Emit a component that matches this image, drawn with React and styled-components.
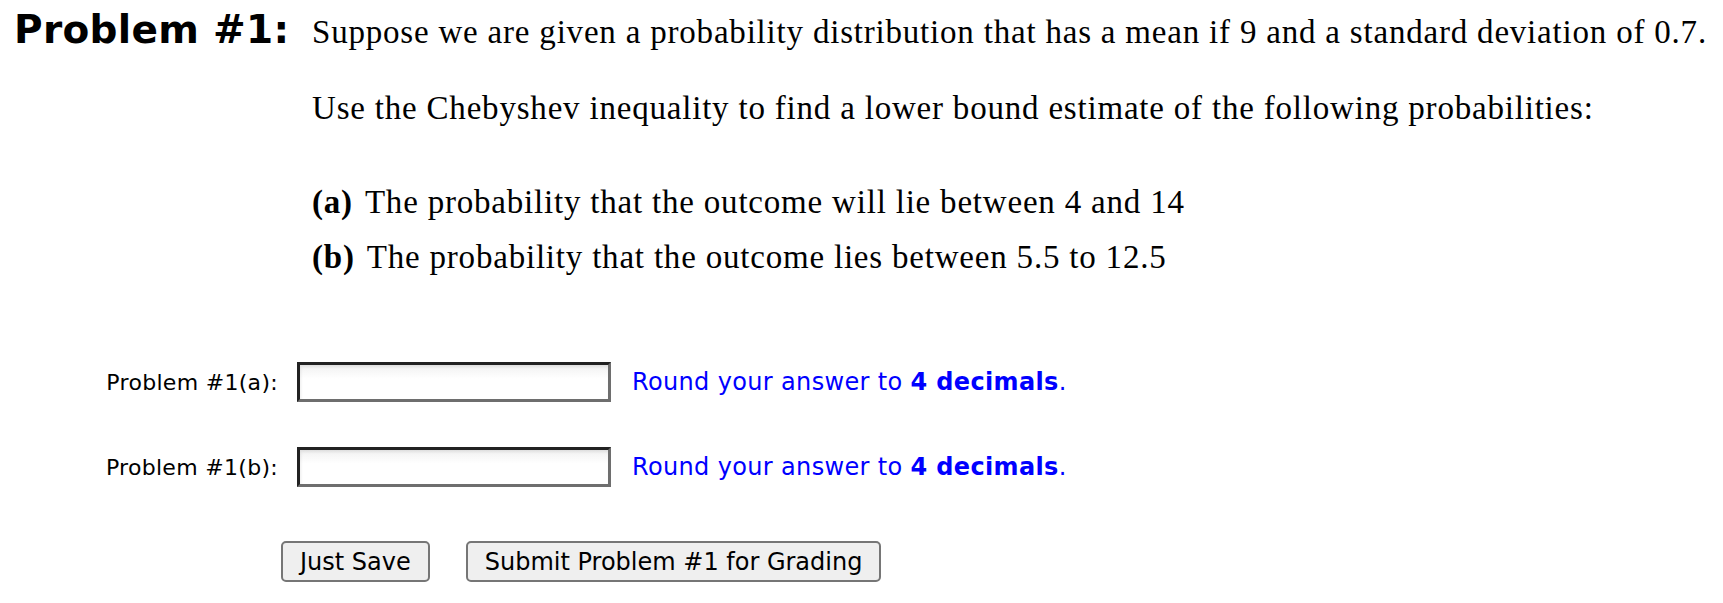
import React from "react";
import styled, { createGlobalStyle } from "styled-components";

const GlobalStyle = createGlobalStyle`
  html, body {
    margin: 0;
    padding: 0;
    background: #ffffff;
  }
`;

const Page = styled.div`
  padding-top: 11px;
  color: #000;
`;

const Header = styled.div`
  display: flex;
  align-items: baseline;
`;

const Heading = styled.h1`
  margin: 0;
  width: 312px;
  flex: none;
  box-sizing: border-box;
  padding-left: 14px;
  font-family: "DejaVu Sans", Verdana, sans-serif;
  font-weight: bold;
  font-size: 39px;
  letter-spacing: 0.3px;
  line-height: 37px;
  white-space: nowrap;
`;

const Statement = styled.div`
  font-family: "Liberation Serif", "Times New Roman", serif;
  font-size: 33px;
  letter-spacing: 0.8px;
  line-height: 37px;
`;

const Para = styled.p`
  margin: ${(p) => p.$gap || 0}px 0 0 0;
  white-space: nowrap;
`;

const Part = styled.p`
  margin: ${(p) => p.$gap || 0}px 0 0 0;
  white-space: nowrap;

  b {
    margin-right: 12px;
  }
`;

const Form = styled.form`
  margin-top: 86px;
  font-family: "DejaVu Sans", Verdana, sans-serif;
`;

const AnswerRow = styled.div`
  display: flex;
  align-items: center;
  height: 40px;
  margin-top: ${(p) => p.$gap || 0}px;
`;

const Label = styled.label`
  width: 278px;
  flex: none;
  text-align: right;
  color: #000;
  font-size: 22px;
  letter-spacing: 0.3px;
  white-space: nowrap;
`;

const Field = styled.input`
  margin-left: 19px;
  width: 314px;
  height: 40px;
  flex: none;
  box-sizing: border-box;
  border-style: solid;
  border-width: 3px;
  border-color: #222 #6e6e6e #6e6e6e #222;
  background: linear-gradient(#f1f1f1, #ffffff 40%);
  box-shadow: inset 1px 2px 3px rgba(0, 0, 0, 0.08);
  outline: none;
  font-size: 20px;
`;

const Hint = styled.span`
  margin-left: 21px;
  color: #0000ff;
  font-size: 24px;
  letter-spacing: 0.35px;
  white-space: nowrap;
`;

const Buttons = styled.div`
  display: flex;
  gap: 36px;
  margin-top: 54px;
  padding-left: 281px;
`;

const Button = styled.button`
  height: 41px;
  padding: 0 17px;
  box-sizing: border-box;
  border: 2px solid #767676;
  border-radius: 5px;
  background: #efefef;
  color: #000;
  font-family: "DejaVu Sans", Verdana, sans-serif;
  font-size: 24px;
  cursor: pointer;
`;

export default function App() {
  return (
    <Page>
      <GlobalStyle />
      <Header>
        <Heading>Problem #1:</Heading>
        <Statement>
          <Para>
            Suppose we are given a probability distribution that has a mean if 9 and a standard deviation of 0.7.
          </Para>
          <Para $gap={39}>
            Use the Chebyshev inequality to find a lower bound estimate of the following probabilities:
          </Para>
          <Part $gap={57}>
            <b>(a)</b>The probability that the outcome will lie between 4 and 14
          </Part>
          <Part $gap={18}>
            <b>(b)</b>The probability that the outcome lies between 5.5 to 12.5
          </Part>
        </Statement>
      </Header>
      <Form onSubmit={(e) => e.preventDefault()}>
        <AnswerRow>
          <Label htmlFor="ans-a">Problem #1(a):</Label>
          <Field id="ans-a" type="text" />
          <Hint>
            Round your answer to <b>4 decimals</b>.
          </Hint>
        </AnswerRow>
        <AnswerRow $gap={45}>
          <Label htmlFor="ans-b">Problem #1(b):</Label>
          <Field id="ans-b" type="text" />
          <Hint>
            Round your answer to <b>4 decimals</b>.
          </Hint>
        </AnswerRow>
        <Buttons>
          <Button type="button">Just Save</Button>
          <Button type="submit">Submit Problem #1 for Grading</Button>
        </Buttons>
      </Form>
    </Page>
  );
}
